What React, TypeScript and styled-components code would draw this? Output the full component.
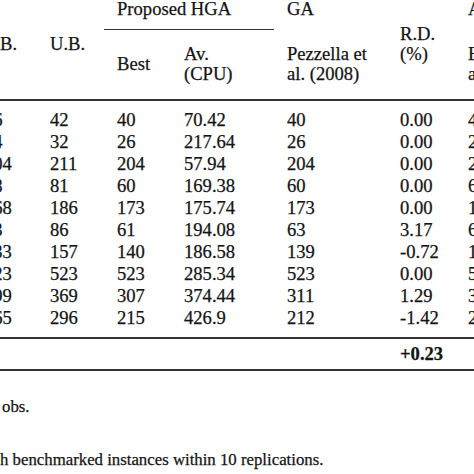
import React from "react";
import styled, { createGlobalStyle } from "styled-components";

const Global = createGlobalStyle`
  html, body { margin: 0; padding: 0; background: #ffffff; }
  #root { width: 474px; height: 474px; }
`;

const Viewport = styled.div`
  width: 474px;
  height: 474px;
  overflow: hidden;
  background: #ffffff;
  color: #141414;
  font-family: "Liberation Serif", "Times New Roman", serif;
  -webkit-text-stroke: 0.25px #141414;
`;

const Table = styled.table`
  margin: -11px 0 0 -29px;
  border-collapse: collapse;
  table-layout: fixed;
  width: 604px;
  font-family: "Liberation Serif", "Times New Roman", serif;
  font-size: 18.6px;
`;

const Head = styled.thead`
  border-bottom: 2px solid #333333;
`;

const Body = styled.tbody`
  border-bottom: 2px solid #333333;
`;

const HeadRow = styled.tr<{ $h: number }>`
  height: ${(p) => p.$h}px;
`;

const Th = styled.th<{ $group?: boolean }>`
  font-weight: normal;
  text-align: left;
  vertical-align: middle;
  padding: 0 0 0 13px;
  line-height: 20px;
  white-space: nowrap;
  overflow: hidden;
  border-bottom: ${(p) => (p.$group ? "1.5px solid #333333" : "none")};
`;

const DataRow = styled.tr<{ $edge?: "first" | "last" }>`
  & > td {
    padding-top: ${(p) => (p.$edge === "first" ? 8 : 0)}px;
    padding-bottom: ${(p) => (p.$edge === "last" ? 8 : 0)}px;
  }
`;

const Td = styled.td`
  padding: 0 0 0 13px;
  line-height: 22px;
  white-space: nowrap;
  overflow: hidden;
  vertical-align: top;
`;

const SummaryRow = styled.tr`
  height: 32px;
`;

const SummaryCell = styled.td<{ $bold?: boolean }>`
  padding: 0 0 0 13px;
  vertical-align: middle;
  font-weight: ${(p) => (p.$bold ? "bold" : "normal")};
  white-space: nowrap;
`;

const Notes = styled.div`
  display: flex;
  flex-direction: column;
  gap: 33px;
  margin-top: 26px;
  font-size: 16.8px;
  line-height: 20px;
`;

const Note = styled.div<{ $indent: number }>`
  padding-left: ${(p) => p.$indent}px;
  white-space: nowrap;
`;

const rows: string[][] = [
  ["36", "42", "40", "70.42", "40", "0.00", "40"],
  ["24", "32", "26", "217.64", "26", "0.00", "26"],
  ["204", "211", "204", "57.94", "204", "0.00", "204"],
  ["48", "81", "60", "169.38", "60", "0.00", "60"],
  ["168", "186", "173", "175.74", "173", "0.00", "173"],
  ["33", "86", "61", "194.08", "63", "3.17", "63"],
  ["133", "157", "140", "186.58", "139", "-0.72", "140"],
  ["523", "523", "523", "285.34", "523", "0.00", "523"],
  ["299", "369", "307", "374.44", "311", "1.29", "312"],
  ["165", "296", "215", "426.9", "212", "-1.42", "214"],
];

const widths = [66, 67, 67, 103, 113, 68, 120];

export default function App() {
  return (
    <>
      <Global />
      <Viewport>
        <Table>
          <colgroup>
            {widths.map((w, i) => (
              <col key={i} style={{ width: w }} />
            ))}
          </colgroup>
          <Head>
            <HeadRow $h={40}>
              <Th rowSpan={2}>L.B.</Th>
              <Th rowSpan={2}>U.B.</Th>
              <Th colSpan={2} $group>
                Proposed HGA
              </Th>
              <Th>GA</Th>
              <Th rowSpan={2}>
                R.D.
                <br />
                (%)
              </Th>
              <Th>AIA</Th>
            </HeadRow>
            <HeadRow $h={71}>
              <Th>Best</Th>
              <Th>
                Av.
                <br />
                (CPU)
              </Th>
              <Th>
                Pezzella et
                <br />
                al. (2008)
              </Th>
              <Th>
                Bagheri et
                <br />
                al. (2010)
              </Th>
            </HeadRow>
          </Head>
          <Body>
            {rows.map((r, i) => (
              <DataRow
                key={i}
                $edge={i === 0 ? "first" : i === rows.length - 1 ? "last" : undefined}
              >
                {r.map((c, j) => (
                  <Td key={j}>{c}</Td>
                ))}
              </DataRow>
            ))}
          </Body>
          <Body>
            <SummaryRow>
              <SummaryCell />
              <SummaryCell />
              <SummaryCell />
              <SummaryCell />
              <SummaryCell />
              <SummaryCell $bold>+0.23</SummaryCell>
              <SummaryCell />
            </SummaryRow>
          </Body>
        </Table>
        <Notes>
          <Note $indent={2}>obs.</Note>
          <Note $indent={0}>h benchmarked instances within 10 replications.</Note>
        </Notes>
      </Viewport>
    </>
  );
}
